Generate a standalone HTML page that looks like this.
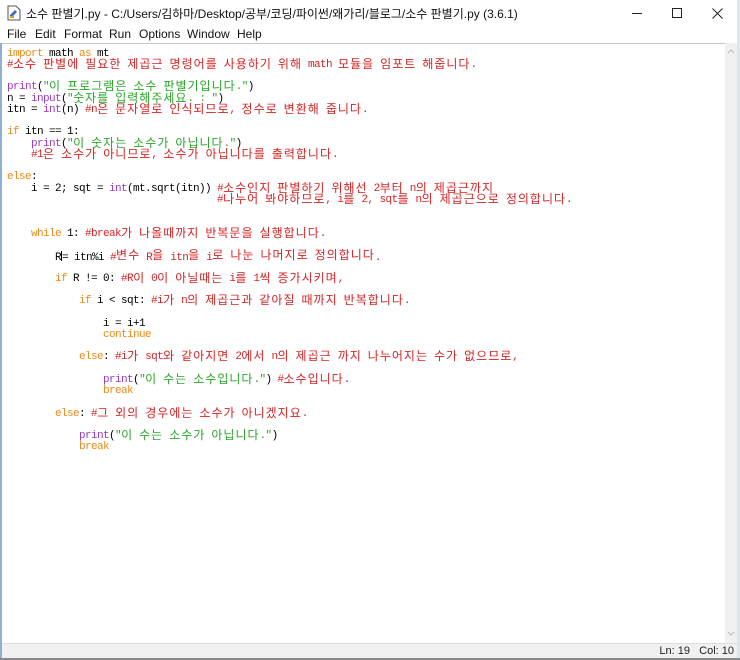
<!DOCTYPE html>
<html><head><meta charset="utf-8"><style>
*{margin:0;padding:0;box-sizing:border-box}
html,body{width:740px;height:660px;overflow:hidden;background:#fff;font-family:"Liberation Sans","Noto Sans CJK KR",sans-serif}
#title{position:absolute;left:0;top:0;width:740px;height:26px;background:#fff;font-size:12px;color:#111}
#title .t{position:absolute;left:26px;top:5px;white-space:nowrap}
#menu{position:absolute;left:0;top:26px;width:740px;height:17px;font-size:12px;color:#111}
#menu span{position:absolute;top:1px}
#editor{position:absolute;left:2px;top:43px;width:723px;height:600px;background:#fff;border-top:1px solid #c8c8c8}
#lb{position:absolute;left:0;top:43px;width:2px;height:617px;background:#8fb0d0}
#sb{position:absolute;left:725px;top:43px;width:12px;height:600px;background:#f0f0f0}
#rb{position:absolute;left:737px;top:0;width:3px;height:660px;background:#dde6ee}
#status{position:absolute;left:2px;top:643px;width:735px;height:15px;background:#f0f0f0;border-top:1px solid #ddd;font-size:11px;color:#222}
#bot{position:absolute;left:0;top:658px;width:740px;height:2px;background:#888}
#code{position:absolute;left:7px;top:48.5px;font-family:"Liberation Mono",monospace;font-size:11px;letter-spacing:-0.6px;color:#000}
#code div{height:11.25px;line-height:11.25px;white-space:pre;overflow:visible}
i{font-style:normal;font-family:"Noto Sans CJK KR",sans-serif;font-size:12px;letter-spacing:1px;display:inline-block;height:11.25px;line-height:11.25px;vertical-align:top;position:relative;top:-2px}
.k{color:#e88a1a}.c{color:#d42424}.s{color:#2aa52a}.b{color:#9a3cc0}
</style></head><body>
<div id="title">
<svg style="position:absolute;left:7px;top:5px" width="14" height="16" viewBox="0 0 14 16"><path d="M1 1h8l4 4v10H1z" fill="#fff" stroke="#555"/><path d="M3 10l5-5 2 2-5 5H3z" fill="#3a6fc0"/><path d="M3 12h4" stroke="#e0a020" stroke-width="2"/></svg>
<span class="t">소수 판별기.py - C:/Users/김하마/Desktop/공부/코딩/파이썬/왜가리/블로그/소수 판별기.py (3.6.1)</span>
<svg style="position:absolute;left:631px;top:8px" width="12" height="10"><path d="M1 5.5h10" stroke="#222"/></svg>
<svg style="position:absolute;left:672px;top:8px" width="11" height="11"><rect x="0.5" y="0.5" width="9" height="9" fill="none" stroke="#222"/></svg>
<svg style="position:absolute;left:712px;top:8px" width="11" height="11"><path d="M0.5 0.5l10 10M10.5 0.5l-10 10" stroke="#222"/></svg>
</div>
<div id="menu"><span style="left:7px">File</span><span style="left:35px">Edit</span><span style="left:64px">Format</span><span style="left:109px">Run</span><span style="left:139px">Options</span><span style="left:187px">Window</span><span style="left:237px">Help</span></div>
<div id="editor"></div>
<div id="lb"></div>
<div id="sb"><svg style="position:absolute;left:2px;top:5px" width="8" height="6"><path d="M1 5l3-3 3 3" stroke="#bbb" fill="none"/></svg><svg style="position:absolute;left:2px;top:588px" width="8" height="6"><path d="M1 1l3 3 3-3" stroke="#bbb" fill="none"/></svg></div>
<div id="rb"></div>
<div id="code">
<div><span class="k">import</span> math <span class="k">as</span> mt</div>
<div class="c">#<i>소수</i> <i>판별에</i> <i>필요한</i> <i>제곱근</i> <i>명령어를</i> <i>사용하기</i> <i>위해</i> math <i>모듈을</i> <i>임포트</i> <i>해줍니다</i>.</div>
<div> </div>
<div><span class="b">print</span>(<span class="s">"<i>이</i> <i>프로그램은</i> <i>소수</i> <i>판별기입니다</i>."</span>)</div>
<div>n = <span class="b">input</span>(<span class="s">"<i>숫자를</i> <i>입력해주세요</i>. : "</span>)</div>
<div>itn = <span class="b">int</span>(n) <span class="c">#n<i>은</i> <i>문자열로</i> <i>인식되므로</i>, <i>정수로</i> <i>변환해</i> <i>줍니다</i>.</span></div>
<div> </div>
<div><span class="k">if</span> itn == 1:</div>
<div>    <span class="b">print</span>(<span class="s">"<i>이</i> <i>숫자는</i> <i>소수가</i> <i>아닙니다</i>."</span>)</div>
<div>    <span class="c">#1<i>은</i> <i>소수가</i> <i>아니므로</i>, <i>소수가</i> <i>아닙니다를</i> <i>출력합니다</i>.</span></div>
<div> </div>
<div><span class="k">else</span>:</div>
<div>    i = 2; sqt = <span class="b">int</span>(mt.sqrt(itn)) <span class="c">#<i>소수인지</i> <i>판별하기</i> <i>위해선</i> 2<i>부터</i> n<i>의</i> <i>제곱근까지</i></span></div>
<div>                                   <span class="c">#<i>나누어</i> <i>봐야하므로</i>, i<i>를</i> 2, sqt<i>를</i> n<i>의</i> <i>제곱근으로</i> <i>정의합니다</i>.</span></div>
<div> </div>
<div> </div>
<div>    <span class="k">while</span> 1: <span class="c">#break<i>가</i> <i>나올때까지</i> <i>반복문을</i> <i>실행합니다</i>.</span></div>
<div> </div>
<div>        R<span style="display:inline-block;width:0;border-left:1px solid #000;height:10px;vertical-align:-1px"></span>= itn%i <span class="c">#<i>변수</i> R<i>을</i> itn<i>을</i> i<i>로</i> <i>나눈</i> <i>나머지로</i> <i>정의합니다</i>.</span></div>
<div> </div>
<div>        <span class="k">if</span> R != 0: <span class="c">#R<i>이</i> 0<i>이</i> <i>아닐때는</i> i<i>를</i> 1<i>씩</i> <i>증가시키며</i>,</span></div>
<div> </div>
<div>            <span class="k">if</span> i &lt; sqt: <span class="c">#i<i>가</i> n<i>의</i> <i>제곱근과</i> <i>같아질</i> <i>때까지</i> <i>반복합니다</i>.</span></div>
<div> </div>
<div>                i = i+1</div>
<div>                <span class="k">continue</span></div>
<div> </div>
<div>            <span class="k">else</span>: <span class="c">#i<i>가</i> sqt<i>와</i> <i>같아지면</i> 2<i>에서</i> n<i>의</i> <i>제곱근</i> <i>까지</i> <i>나누어지는</i> <i>수가</i> <i>없으므로</i>,</span></div>
<div> </div>
<div>                <span class="b">print</span>(<span class="s">"<i>이</i> <i>수는</i> <i>소수입니다</i>."</span>) <span class="c">#<i>소수입니다</i>.</span></div>
<div>                <span class="k">break</span></div>
<div> </div>
<div>        <span class="k">else</span>: <span class="c">#<i>그</i> <i>외의</i> <i>경우에는</i> <i>소수가</i> <i>아니겠지요</i>.</span></div>
<div> </div>
<div>            <span class="b">print</span>(<span class="s">"<i>이</i> <i>수는</i> <i>소수가</i> <i>아닙니다</i>."</span>)</div>
<div>            <span class="k">break</span></div>
</div>
<div id="status"><span style="position:absolute;right:3px;top:1px">Ln: 19&nbsp;&nbsp;&nbsp;Col: 10</span></div>
<div id="bot"></div>
</body></html>
